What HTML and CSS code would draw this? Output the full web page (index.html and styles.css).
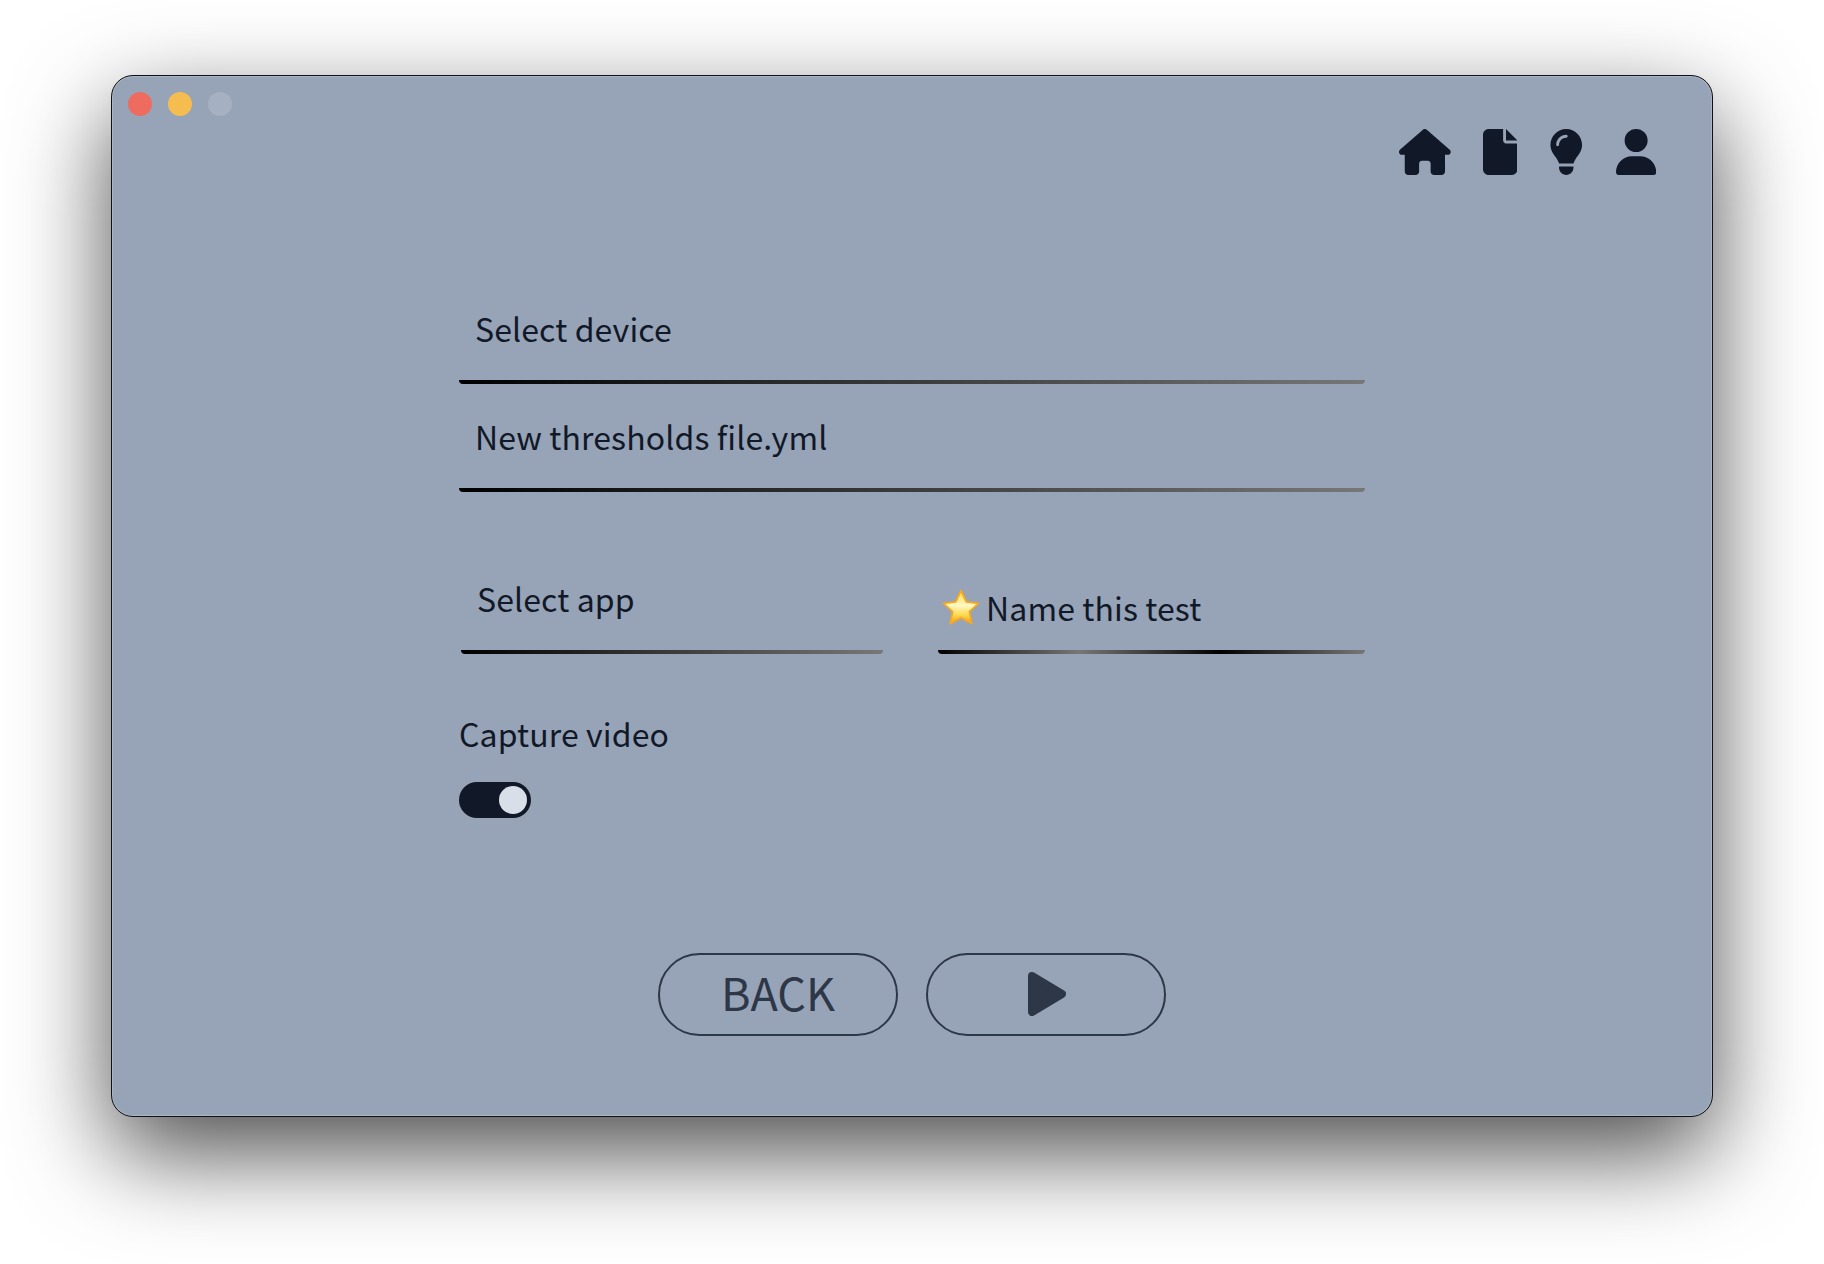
FILE: index.html
```html
<!DOCTYPE html>
<html lang="en">
<head>
    <meta charset="UTF-8">
    <meta name="viewport" content="width=device-width, initial-scale=1.0">
    <title>New test</title>
    <link rel="stylesheet" href="styles.css">
</head>
<body>
    <div class="window">
        <div class="traffic">
            <span class="dot dot-red"></span>
            <span class="dot dot-yellow"></span>
            <span class="dot dot-gray"></span>
        </div>
        <nav class="nav">
            <svg class="nav-icon" viewBox="0 0 576 512"><path d="M575.8 255.5c0 18-15 32.1-32 32.1h-32l.7 160.2c0 2.7-.2 5.4-.5 8.1V472c0 22.1-17.9 40-40 40H456c-1.1 0-2.2 0-3.3-.1c-1.4 .1-2.8 .1-4.2 .1H416 392c-22.1 0-40-17.9-40-40V448 384c0-17.7-14.3-32-32-32H256c-17.7 0-32 14.3-32 32v64 24c0 22.1-17.9 40-40 40H160 128.1c-1.5 0-3-.1-4.5-.2c-1.2 .1-2.4 .2-3.6 .2H104c-22.1 0-40-17.9-40-40V360c0-.9 0-1.9 .1-2.8V287.6H32c-18 0-32-14-32-32.1c0-9 3-17 10-24L266.4 8c7-7 15-8 22-8s15 2 21 7L564.8 231.5c8 7 12 15 11 24z"/></svg>
            <svg class="nav-icon" viewBox="0 0 384 512"><path d="M0 64C0 28.7 28.7 0 64 0H224V128c0 17.7 14.3 32 32 32H384V448c0 35.3-28.7 64-64 64H64c-35.3 0-64-28.7-64-64V64zm384 64H256V0L384 128z"/></svg>
            <svg class="nav-icon" viewBox="0 0 384 512"><path d="M272 384c9.6-31.9 29.5-59.1 49.2-86.2l0 0c5.2-7.1 10.4-14.2 15.4-21.4c19.8-28.5 31.4-63 31.4-100.3C368 78.8 289.2 0 192 0S16 78.8 16 176c0 37.3 11.6 71.9 31.4 100.3c5 7.2 10.2 14.3 15.4 21.4l0 0c19.8 27.1 39.7 54.4 49.2 86.2H272zM192 512c44.2 0 80-35.8 80-80V416H112v16c0 44.2 35.8 80 80 80zM112 176c0 8.8-7.2 16-16 16s-16-7.2-16-16c0-61.9 50.1-112 112-112c8.8 0 16 7.2 16 16s-7.2 16-16 16c-44.2 0-80 35.8-80 80z"/></svg>
            <svg class="nav-icon" viewBox="0 0 448 512"><path d="M224 256A128 128 0 1 0 224 0a128 128 0 1 0 0 256zm-45.7 48C79.8 304 0 383.8 0 482.3C0 498.7 13.3 512 29.7 512H418.3c16.4 0 29.7-13.3 29.7-29.7C448 383.8 368.2 304 269.7 304H178.3z"/></svg>
        </nav>
        <form class="main-form">
            <div class="field">Select device</div>
            <div class="field">New thresholds file.yml</div>
            <div class="field-row">
                <div class="field field-app">Select app</div>
                <div class="field field-name">
                    <svg class="star" viewBox="0 0 38 36">
                        <defs>
                            <linearGradient id="star-fill" x1="0" y1="0" x2="0" y2="1">
                                <stop offset="0" stop-color="#fdd835"/>
                                <stop offset="0.45" stop-color="#fff8c4"/>
                                <stop offset="0.72" stop-color="#ffdc55"/>
                                <stop offset="1" stop-color="#ee9a0e"/>
                            </linearGradient>
                        </defs>
                        <path d="M19 1.6l5.3 11.2 12.1 1.5-9 8.4 2.4 12-10.8-6-10.8 6 2.4-12-9-8.4 12.1-1.5z" fill="url(#star-fill)" stroke="#f6a821" stroke-width="1.8" stroke-linejoin="round"/>
                    </svg>
                    <span>Name this test</span>
                </div>
            </div>
            <div class="capture">
                <div class="capture-label">Capture video</div>
                <div class="toggle"><span class="toggle-knob"></span></div>
            </div>
            <div class="actions">
                <button type="button" class="btn"><span class="btn-label">BACK</span></button>
                <button type="button" class="btn">
                    <svg class="play" viewBox="0 0 38 44"><polygon points="4,4 34,22 4,40"/></svg>
                </button>
            </div>
        </form>
    </div>
</body>
</html>
```

FILE: styles.css
```css
html, body {
    height: 100%;
}

body {
    margin: 0;
    padding: 75px 0 0 111px;
    box-sizing: border-box;
    overflow: hidden;
    background: #fff;
    font-family: "Noto Sans CJK SC", "Noto Sans", sans-serif;
    color: #111827;
}

.window {
    box-sizing: border-box;
    width: 1602px;
    height: 1042px;
    border: 1px solid #111;
    border-radius: 22px;
    background: #97a4b7;
    box-shadow: inset 0 0 0 1px #aab5c6, 0 36px 96px rgba(0, 0, 0, 0.7);
}

.traffic {
    display: flex;
    gap: 16px;
    padding: 16px 16px 0;
}

.dot {
    width: 24px;
    height: 24px;
    border-radius: 50%;
}

.dot-red { background: #ee6b60; }
.dot-yellow { background: #f5bd4f; }
.dot-gray { background: #a5b0c0; }

.nav {
    display: flex;
    justify-content: flex-end;
    gap: 32px;
    margin-top: 13px;
    padding-right: 56px;
}

.nav-icon {
    display: block;
    height: 46px;
    fill: #111827;
}

.main-form {
    width: 906px;
    margin: 101px 0 0 347px;
    font-size: 32px;
    line-height: 44px;
    letter-spacing: 0.12px;
}

.field {
    position: relative;
    height: 108px;
    box-sizing: border-box;
    padding: 30px 0 0 16px;
}

.field::after {
    content: "";
    position: absolute;
    left: 0;
    right: 0;
    bottom: 0;
    height: 4px;
    border-radius: 0 0 4px 4px;
    background: linear-gradient(to right, #000, #777);
}

.field-row {
    display: flex;
    justify-content: space-between;
    margin-top: 54px;
}

.field-app {
    width: 422px;
    margin-left: 2px;
}

.field-name {
    display: flex;
    align-items: flex-start;
    width: 427px;
    padding: 39px 0 0 4px;
}

.field-name::after {
    background: linear-gradient(to right, #000 0%, #777 33%, #000 66%, #777 100%);
}

.star {
    flex: none;
    width: 38px;
    height: 36px;
    margin: 4px 6px 0 0;
}

.capture {
    margin-top: 57px;
}

.toggle {
    box-sizing: border-box;
    width: 72px;
    height: 36px;
    margin-top: 27px;
    padding: 4px;
    display: flex;
    justify-content: flex-end;
    border-radius: 18px;
    background: #111827;
}

.toggle-knob {
    width: 28px;
    height: 28px;
    border-radius: 50%;
    background: #d8dfe9;
}

.actions {
    display: flex;
    justify-content: center;
    gap: 28px;
    margin-top: 135px;
}

.btn {
    display: flex;
    align-items: center;
    justify-content: center;
    width: 240px;
    height: 83px;
    padding: 0 0 2px;
    border: 2px solid #2d3748;
    border-radius: 42px;
    background: transparent;
    color: #2d3748;
    font-family: inherit;
    font-size: 45px;
}

.btn-label {
    margin-bottom: 4px;
}

.play {
    width: 38px;
    height: 44px;
    margin-left: 1px;
    fill: #2d3748;
    stroke: #2d3748;
    stroke-width: 8;
    stroke-linejoin: round;
}
```
